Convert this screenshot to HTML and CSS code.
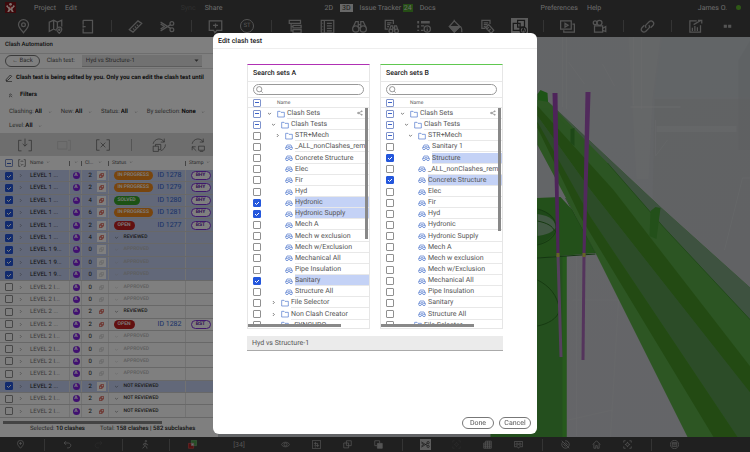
FILE: index.html
```html
<!DOCTYPE html>
<html lang="en">
<head>
  <meta charset="UTF-8">
  <meta name="viewport" content="width=device-width, initial-scale=1">
  <title>Clash Automation</title>
  <link rel="stylesheet" href="styles.css">
</head>
<body>

  <!-- Icon set -->
  <svg class="sprite" aria-hidden="true">
    <symbol id="i-pin" viewBox="0 0 24 24"><path d="M12 22C7 16 4 13 4 9a8 8 0 0 1 16 0c0 4-3 7-8 13z"/><circle cx="12" cy="9" r="3"/></symbol>
    <symbol id="i-pin-plus" viewBox="0 0 24 24"><path d="M12 22C7 16 4 13 4 9a8 8 0 0 1 16 0c0 4-3 7-8 13zM12 5v8M8 9h8"/></symbol>
    <symbol id="i-map" viewBox="0 0 24 24"><path d="M13 18l-4-2-7 4V5l7-3 6 3 7-3v10M9 2v14M15 5v8"/><path d="M18 23c-3-3-4-4-4-6a4 4 0 0 1 8 0c0 2-1 3-4 6z"/><circle cx="18" cy="17" r="1"/></symbol>
    <symbol id="i-door" viewBox="0 0 24 24"><path d="M5 2h15v20H5v-7M5 2v7M5 10v4M9 12h-4"/></symbol>
    <symbol id="i-ruler" viewBox="0 0 24 24"><path d="M2 17L16 3l6 4L8 21zM8 15l2 2M11 12l2 2M14 9l2 2"/></symbol>
    <symbol id="i-scissors" viewBox="0 0 24 24"><path d="M1 5l16 10M1 19L17 9M1 8l6 4-6 4"/><circle cx="19" cy="7" r="3"/><circle cx="19" cy="17" r="3"/></symbol>
    <symbol id="i-comment" viewBox="0 0 24 24"><path d="M2 3h20v15h-8l-3 4-2-4H2zM12 7v7M8 10h8"/></symbol>
    <symbol id="i-tree" viewBox="0 0 24 24"><path d="M2 2h18v5H2zM8 10h13v4H8zM8 17h13v5H8zM5 7v12h3M5 12h3"/></symbol>
    <symbol id="i-list" viewBox="0 0 24 24"><path d="M2 2h20v20H2zM7 2v20M11 7h8M11 11h8M11 15h8M11 19h8M4 7h1M4 12h1M4 17h1"/></symbol>
    <symbol id="i-bino" viewBox="0 0 24 24"><circle cx="6" cy="16" r="5"/><circle cx="18" cy="16" r="5"/><path d="M2 13L6 4h4v10M22 13L18 4h-4v10M10 9h4M10 14h4"/></symbol>
    <symbol id="i-set" viewBox="0 0 24 24"><circle cx="6" cy="16" r="4"/><circle cx="18" cy="16" r="4"/><path d="M2 15l4-9h12l4 9M9 11h6M10 16h4"/></symbol>
    <symbol id="i-docbino" viewBox="0 0 24 24"><path d="M7 16H2V2h13v6M5 6h7M5 9h5M5 12h3"/><circle cx="11" cy="19" r="3"/><circle cx="20" cy="19" r="3"/><path d="M9 17l2-6h3v7M22 17l-2-6h-3v7M14 14h3"/></symbol>
    <symbol id="i-listinfo" viewBox="0 0 24 24"><path d="M2 4h3M8 4h14M2 11h3M8 11h5M2 18h3M8 18h4M2 6h3M8 6h14M2 13h3"/><circle cx="18" cy="16" r="5"/><path d="M18 15v4M18 13v1"/></symbol>
    <symbol id="i-bucket" viewBox="0 0 24 24"><path d="M10 3l9 9-9 9-8-9zM10 3V1M19 12c4 1 3 6 3 9"/><path class="solid" d="M3 12h16l-9 9z"/></symbol>
    <symbol id="i-docpen" viewBox="0 0 24 24"><path d="M8 15H3V2h13v6M6 6h7M6 9h6M6 12h3M9 14l5-5 8 9-4 5zM11 16l3-3M14 19l3-3"/></symbol>
    <symbol id="i-auto" viewBox="0 0 24 24"><path d="M9 2h11v11H9zM2 7h11v11H2z"/><circle cx="18" cy="18" r="5"/><path d="M16 20l2-5 2 5"/></symbol>
    <symbol id="i-play" viewBox="0 0 24 24"><path d="M1 3h17v13H1zM20 8h3v13H6v-3M8 7l5 3-5 3z"/></symbol>
    <symbol id="i-camera" viewBox="0 0 24 24"><circle cx="5" cy="6" r="3"/><circle cx="12" cy="6" r="4"/><path d="M4 11h13v10H4zM17 15l5-3v8l-5-2"/></symbol>
    <symbol id="i-link" viewBox="0 0 24 24"><path d="M10 14c-2-2-1-4 0-5l5-5c4-3 9 2 6 6l-4 4M14 10c2 2 1 4 0 5l-5 5c-4 3-9-2-6-6l4-4"/></symbol>
    <symbol id="i-chart" viewBox="0 0 24 24"><path d="M14 3H3v18h17V10M7 19v-5M11 19v-8M15 19v-6M9 9l12-7M16 2h6v5"/></symbol>
    <symbol id="i-dots" viewBox="0 0 24 24"><path d="M7 10h3v3H7zM14 10h3v3h-3z" class="solid"/></symbol>
    <symbol id="i-undo" viewBox="0 0 24 24"><path d="M8 3L3 8l5 5M3 8h11c10 1 8 13 0 13h-3"/></symbol>
    <symbol id="i-redo" viewBox="0 0 24 24"><path d="M16 3l5 5-5 5M21 8H10C0 9 2 21 10 21h3"/></symbol>
    <symbol id="i-walk" viewBox="0 0 24 24"><circle cx="13" cy="3" r="2"/><path d="M12 8l-2 7 5 3 1 5M10 15l-2 4-4 3M12 8l-5 2-1 4M13 8l2 4 4 1"/></symbol>
    <symbol id="i-eye" viewBox="0 0 24 24"><path d="M1 12c5-8 17-8 22 0-5 8-17 8-22 0z"/><circle cx="12" cy="12" r="4"/></symbol>
    <symbol id="i-cross" viewBox="0 0 24 24"><path d="M1 1h22v22H1zM9 5v10h10M5 9h10v10M5 15h2M9 17v3"/></symbol>
    <symbol id="i-squares" viewBox="0 0 24 24"><path d="M9 2h13v13H9zM2 8h13v13H2z"/></symbol>
    <symbol id="i-solid" viewBox="0 0 24 24"><path d="M2 2h13v6M2 2v13h6"/><path class="solid" d="M9 9h13v13H9z"/></symbol>
    <symbol id="i-grid" viewBox="0 0 24 24"><path d="M2 8h20M2 13h20M2 18h20M2 22h20M2 8v14M7 3v19M12 3v19M17 3v19M22 3v19M7 3h15"/></symbol>
    <symbol id="i-vr" viewBox="0 0 24 24"><path d="M1 4h22v14h-8l-3 4-3-4H1z"/><circle cx="8" cy="11" r="3"/><circle cx="16" cy="11" r="3"/></symbol>
    <symbol id="i-orbit" viewBox="0 0 24 24"><path d="M4 6a10 10 0 1 0 7-4M2 2l20 20M12 7l5 5-5 5-5-5z"/></symbol>
    <symbol id="i-home" viewBox="0 0 24 24"><path d="M2 12L12 2l10 10M5 10v12h5v-7h4v7h5V10"/></symbol>
    <symbol id="i-focus" viewBox="0 0 24 24"><path d="M2 7V2h5M17 2h5v5M22 17v5h-5M7 22H2v-5"/><circle cx="12" cy="12" r="4"/><path d="M12 5v3M12 16v3M5 12h3M16 12h3"/></symbol>
    <symbol id="i-log" viewBox="0 0 24 24"><circle cx="12" cy="12" r="11"/><path d="M6 7h12v10H6zM6 10h12M9 13h6"/></symbol>
    <symbol id="i-pencil" viewBox="0 0 24 24"><path d="M4 16L16 3l4 4L8 19l-5 1zM3 23h18"/></symbol>
    <symbol id="i-up2" viewBox="0 0 24 24"><path d="M5 11l7-7 7 7M5 20l7-7 7 7"/></symbol>
    <symbol id="i-down" viewBox="0 0 24 24"><path d="M5 9l7 7 7-7"/></symbol>
    <symbol id="i-right" viewBox="0 0 24 24"><path d="M9 5l7 7-7 7"/></symbol>
    <symbol id="i-caret" viewBox="0 0 24 24"><path class="solid" d="M4 8h16l-8 9z"/></symbol>
    <symbol id="i-import" viewBox="0 0 24 24"><path d="M6 4H1v18h5M18 4h5v18h-5M12 1v13M8 10l4 4 4-4"/></symbol>
    <symbol id="i-box" viewBox="0 0 24 24"><path d="M1 6h16v13H1zM19 4h4v17h-4"/></symbol>
    <symbol id="i-clear" viewBox="0 0 24 24"><path d="M6 3H1v18h5M18 3h5v18h-5M8 8l8 8M16 8l-8 8"/></symbol>
    <symbol id="i-sync1" viewBox="0 0 24 24"><path d="M2 10C4 0 17-1 21 7M21 1v6h-6M23 11c0 5-3 9-8 11M2 14h9v9H2zM6 14v-3h9v9h-4"/></symbol>
    <symbol id="i-sync2" viewBox="0 0 24 24"><path d="M2 10C4 0 17-1 21 7M21 1v6h-6M2 21v-6h6M2 15l7 7M13 14h10v7H13zM15 23h6"/></symbol>
    <symbol id="i-expand" viewBox="0 0 24 24"><path d="M7 2H2v20h5M17 2h5v20h-5M8 9l4-4 4 4M8 15l4 4 4-4"/></symbol>
    <symbol id="i-clash" viewBox="0 0 24 24"><path d="M9 2h13v13H9zM2 9h13v13H2z"/></symbol>
    <symbol id="i-folder" viewBox="0 0 24 24"><path d="M2 4h7l3 3h10v14H2z"/></symbol>
    <symbol id="i-share" viewBox="0 0 24 24"><circle cx="5" cy="12" r="3"/><circle cx="19" cy="5" r="2"/><circle cx="19" cy="19" r="2"/><path d="M7 11l10-5M7 13l10 5"/></symbol>
    <symbol id="i-search" viewBox="0 0 24 24"><circle cx="11" cy="11" r="9"/><path d="M18 18l5 5"/></symbol>
  </svg>

  <div class="app">
    <header class="menu">
      <nav class="menu-left">
        <svg class="logo" viewBox="0 0 24 24" aria-hidden="true"><rect width="24" height="24" fill="#7a1218"/><g fill="#ffe4dc"><circle cx="12" cy="5" r="3"/><circle cx="5" cy="9" r="2"/><circle cx="19" cy="9" r="2"/><path d="M3 10l9 1 9-1-5 5 3 7h-4l-3-5-3 5H5l3-7z"/></g><circle cx="12" cy="12" r="2" fill="#e03030"/></svg>
        <a href="#">Project</a>
        <a href="#">Edit</a>
        <a href="#" class="off push">Sync</a>
        <a href="#">Share</a>
      </nav>
      <nav class="menu-mid">
        <a href="#">2D</a>
        <a href="#" class="mode">3D</a>
        <a href="#">Issue Tracker <b class="count">24</b></a>
        <a href="#">Docs</a>
      </nav>
      <nav class="menu-right">
        <a href="#">Preferences</a>
        <a href="#">Help</a>
        <a href="#" class="push">James O.</a>
        <i class="online"></i>
      </nav>
    </header>

    <div class="tools" id="tools" role="toolbar" aria-label="Main tools"></div>

    <main class="work">
      <section class="panel">
        <h1>Clash Automation</h1>
        <div class="test-row">
          <button class="pill">← Back</button>
          <label for="test">Clash test:</label>
          <span class="drop">
            <select id="test"><option>Hyd vs Structure-1</option></select>
            <svg><use href="#i-caret"/></svg>
          </span>
        </div>
        <p class="notice"><svg><use href="#i-pencil"/></svg>Clash test is being edited by you. Only you can edit the clash test until</p>
        <h2><svg><use href="#i-up2"/></svg>Filters</h2>
        <div class="filters">
          <label>Clashing: <select><option>All</option></select><svg><use href="#i-down"/></svg></label>
          <label>New: <select><option>All</option></select><svg><use href="#i-down"/></svg></label>
          <label>Status: <select><option>All</option></select><svg><use href="#i-down"/></svg></label>
          <label>By selection: <select><option>None</option></select><svg><use href="#i-down"/></svg></label>
          <label>Level: <select><option>All</option></select><svg><use href="#i-down"/></svg></label>
        </div>
        <div class="actions">
          <button aria-label="Import"><svg><use href="#i-import"/></svg></button>
          <button aria-label="Group" disabled><svg><use href="#i-box"/></svg></button>
          <button aria-label="Clear"><svg><use href="#i-clear"/></svg></button>
          <i class="sep"></i>
          <button aria-label="Refresh clashes"><svg><use href="#i-sync1"/></svg></button>
          <button aria-label="Refresh view"><svg><use href="#i-sync2"/></svg></button>
        </div>
        <div class="grid-wrap">
          <table class="clashes">
            <colgroup><col class="c-check"><col class="c-open"><col class="c-name"><col class="c-user"><col class="c-num"><col class="c-view"><col class="c-status"><col></colgroup>
            <thead>
              <tr>
                <th><input type="checkbox" class="some" aria-label="Select all"></th>
                <th><svg class="expand"><use href="#i-expand"/></svg></th>
                <th>Name <svg><use href="#i-down"/></svg></th>
                <th class="bar"><svg><use href="#i-down"/></svg></th>
                <th class="bar">Cl...</th>
                <th><svg><use href="#i-down"/></svg></th>
                <th class="bar">Status <svg><use href="#i-down"/></svg></th>
                <th class="bar">Stamp <svg><use href="#i-down"/></svg></th>
              </tr>
            </thead>
            <tbody id="clashes"></tbody>
          </table>
        </div>
        <div class="hbar"></div>
        <p class="totals"><span>Selected: <b>10 clashes</b></span><span>Total: <b>158 clashes | 582 subclashes</b></span></p>
      </section>

      <!-- Model view -->
      <svg class="model" viewBox="217 37 533 400" preserveAspectRatio="xMaxYMid slice" role="img" aria-label="3D model">
        <defs>
          <linearGradient id="haze" x1="0" y1="0" x2="1" y2="1">
            <stop offset="0" stop-color="#c8ccce"/>
            <stop offset="1" stop-color="#c6c8ce"/>
          </linearGradient>
        </defs>
        <rect x="217" y="37" width="533" height="400" fill="url(#haze)"/>
        <path d="M628 37h32l-8 62-4 80h-12z" fill="#d4d6d8" opacity=".3"/>
        <path d="M662 37h88v60h-96z" fill="#c2ccd0" opacity=".6"/>
        <path d="M654 99h96v189L652 207z" fill="#bcc0c4" opacity=".4"/>
        <path d="M656 126h80v6h-80zM630 106h50v2h-50z" fill="#d8dadd" opacity=".4"/>
        <path d="M738 60l12-20v110h-12z" fill="#b8bcc0" opacity=".4"/>
        <g fill="none" stroke="#dadcdf" opacity=".35">
          <path d="M562 37v70M566 37v72M633 37v68M641 37v72M568 62l16 22M602 64l12 22M724 250l18-72h8M572 300h46l-8 137M576 256v180M568 420l44-10"/>
          <path d="M655 120v36l12-16"/>
        </g>
        <path d="M566 256h32l90 181H566z" fill="#d0d2d4" opacity=".3"/>
        <path d="M536 198l24-1 12 13 23 43-58 5-47 5v-64z" fill="#46a034"/>
        <path d="M490 260l76-4v181h-76z" fill="#489e3c"/>
        <path d="M562 256h4v181h-4z" fill="#4cb238"/>
        <path d="M537 209c22 4 28 25 0 36v-10c16-5 16-12 0-14z" fill="#3c9030"/>
        <path d="M537 214c14 2 18 7 18 14-4 5-10 7-18 8z" fill="#84b088"/>
        <path d="M537 209c24 6 26 30 0 36M537 221c10 2 15 5 17 10M537 280c12 6 20 15 22 30-2 9-12 14-22 16" fill="none" stroke="#2c7422"/>
        <path d="M490 261l47-3 58-4" fill="none" stroke="#286c22"/>
        <path d="M537 94l3-4 7 3 1 17h-11z" fill="#3ca82e"/>
        <path d="M537 100l11 2 112 105 90 81v149h-63l-92-184-58-108z" fill="#5aac46"/>
        <path d="M547 101l113 106 90 81v32l-87-93-56-64z" fill="#7ca480"/>
        <path d="M547 108l60 55 56 64 87 93v47L613 190l-76-82z" fill="#58aa46"/>
        <path d="M537 106l76 84 137 177v27L590 190l-53-74z" fill="#469426"/>
        <path d="M537 116l53 74 160 203v44h-13L590 217l-53-93z" fill="#589850"/>
        <path d="M537 122l53 95 147 220h-24L580 217l-43-89z" fill="#469426"/>
        <path d="M607 163l56 64 87 93M565 198l30 55" fill="none" stroke="#3a8c2c" opacity=".7"/>
        <path d="M650 211l5-4 5 1-4 31-7-3z" fill="#46a034"/>
        <path d="M570 129l4-1v18l-4-3z" fill="#3c9030"/>
        <path d="M552 93h5l2 162h-3z" fill="#9c48b4"/>
        <path d="M556 255h3l3 102h-3z" fill="#ac80bc"/>
        <path d="M585 92h5l-5 163h-3z" fill="#a254b8"/>
        <path d="M582 255h3l-1 105h-3z" fill="#a868b8"/>
        <path d="M556 253h3v4h-3zM582 253h3v4h-3z" fill="#c8c84c"/>
      </svg>
    </main>

    <footer class="status" id="status" role="toolbar" aria-label="View tools"></footer>
  </div>

  <!-- Edit clash test -->
  <div class="overlay">
    <div class="modal" role="dialog" aria-modal="true" aria-labelledby="modal-title">
      <h2 id="modal-title">Edit clash test</h2>
      <div class="modal-body">
        <div class="sets">
          <section class="set set-a">
            <h3>Search sets A</h3>
            <div class="search"><svg><use href="#i-search"/></svg><input type="search" aria-label="Search sets A"></div>
            <div class="tree-wrap">
              <div class="tree-head"><input type="checkbox" class="some" aria-label="Select all in A"><span>Name</span></div>
              <div class="tree-clip"><table class="tree" id="treeA"></table><i class="vbar"></i></div>
              <div class="hbar"></div>
            </div>
          </section>
          <section class="set set-b">
            <h3>Search sets B</h3>
            <div class="search"><svg><use href="#i-search"/></svg><input type="search" aria-label="Search sets B"></div>
            <div class="tree-wrap">
              <div class="tree-head"><input type="checkbox" class="some" aria-label="Select all in B"><span>Name</span></div>
              <div class="tree-clip"><table class="tree" id="treeB"></table><i class="vbar short"></i></div>
              <div class="hbar"></div>
            </div>
          </section>
        </div>
        <input type="text" class="test-name" value="Hyd vs Structure-1" aria-label="Clash test name">
      </div>
      <div class="modal-foot">
        <button class="pill">Done</button>
        <button class="pill">Cancel</button>
      </div>
    </div>
  </div>

  <script src="script.js"></script>
</body>
</html>
```

FILE: styles.css
```css
* {
  box-sizing: border-box;
}

body {
  margin: 0;
  font-family: Roboto, 'Liberation Sans', sans-serif;
  font-size: 7px;
  line-height: 10px;
  color: #555;
  text-rendering: geometricPrecision;
}

h1, h2, h3, p {
  margin: 0;
  font-size: inherit;
  font-weight: 500;
  color: #222;
}

a {
  color: inherit;
  text-decoration: none;
}

button, input, select {
  font: inherit;
  color: inherit;
  text-rendering: inherit;
  margin: 0;
  padding: 0;
  border: none;
  background: none;
}

svg {
  width: 8px;
  height: 8px;
  flex: none;
  fill: none;
  stroke: currentColor;
  stroke-width: 2;
}

svg .solid {
  fill: currentColor;
}

.sprite {
  display: none;
}

.app {
  height: 100vh;
  display: flex;
  flex-direction: column;
}

.push {
  margin-left: auto;
}

.off {
  opacity: .2;
}

/* top menu */
.menu {
  display: grid;
  grid-template-columns: 1fr auto 1fr;
  height: 15px;
  background: #404040;
  color: #d8d8d8;
}

.menu nav {
  display: flex;
  align-items: center;
  gap: 9px;
}

.menu .menu-left {
  padding-left: 5px;
  padding-right: 92px;
}

.menu .menu-mid {
  gap: 7px;
  padding-left: 10px;
}

.menu-left .logo {
  width: 11px;
  height: 11px;
  margin-right: 9px;
  stroke: none;
}

.menu .menu-right {
  padding-left: 105px;
  padding-right: 9px;
}

.mode {
  padding: 0 2px;
  line-height: 8px;
  background: #d0d0d0;
  color: #333;
}

.count {
  padding: 0 1px;
  font-weight: 400;
  background: #4a9a2a;
}

.online {
  width: 5px;
  height: 5px;
  border-radius: 50%;
  background: #5cb02c;
}

/* toolbars */
.tools, .status {
  display: flex;
  align-items: center;
  background: #404040;
  color: #a8a8a8;
}

.tools {
  height: 22px;
  justify-content: center;
}

.tools button, .status button {
  display: flex;
  align-items: center;
  justify-content: center;
  width: 32px;
  height: 100%;
}

.tools svg {
  width: 15px;
  height: 15px;
}

.sep {
  width: 16px;
  height: 12px;
  background: linear-gradient(#686868, #686868) center / 1px 100% no-repeat;
}

.ring {
  width: 14px;
  height: 14px;
  line-height: 12px;
  border: 1px solid;
  border-radius: 50%;
  text-align: center;
  font-size: 6px;
}

.active {
  display: flex;
  padding: 1px;
  background: #b8b8b8;
  color: #333;
}

.status {
  height: 15px;
  padding-left: 5px;
}

.status button {
  width: 31px;
}

.status button.wide {
  width: 62px;
}

.status svg {
  width: 9px;
  height: 9px;
}

.work {
  flex: 1;
  min-height: 0;
  display: flex;
}

.model {
  flex: 1;
  width: auto;
  height: 100%;
  min-width: 0;
  stroke: none;
  stroke-width: 1;
}

/* clash panel */
.panel {
  flex: none;
  width: 29%;
  display: flex;
  flex-direction: column;
  overflow: hidden;
  font-size: 6px;
  background: #fff;
}

.panel h1 {
  padding: 3px 5px;
  border-bottom: 1px solid #ddd;
}

.test-row {
  display: flex;
  align-items: center;
  gap: 7px;
  padding: 1px 5px;
  border-bottom: 1px solid #e4e4e4;
}

.pill {
  height: 12px;
  padding: 0 6px;
  border: 1px solid #777;
  border-radius: 6px;
  line-height: 10px;
}

.drop {
  display: flex;
  align-items: center;
  flex: 0 1 120px;
  height: 12px;
  background: #e2e2e2;
  border-bottom: 1px solid #bbb;
}

select {
  appearance: none;
}

.drop select {
  flex: 1;
  padding-left: 4px;
}

.drop svg {
  width: 5px;
  height: 5px;
  margin-right: 3px;
}

.notice {
  display: flex;
  align-items: center;
  gap: 3px;
  padding: 4px 5px;
  font-weight: 700;
  white-space: nowrap;
}

.panel h2 {
  display: flex;
  align-items: center;
  gap: 7px;
  padding: 3px 8px;
  font-weight: 700;
}

.panel h2 svg {
  width: 5px;
  height: 5px;
  stroke-width: 3;
}

.filters {
  display: flex;
  flex-wrap: wrap;
  gap: 4px 9px;
  padding: 4px 0 2px 9px;
}

.filters label {
  display: flex;
  align-items: center;
  gap: 1px;
}

.filters select {
  font-weight: 700;
  color: #222;
}

.filters svg, th svg {
  width: 4px;
  height: 4px;
  margin-left: 4px;
}

.actions {
  display: flex;
  align-items: center;
  justify-content: space-between;
  height: 23px;
  padding: 0 12px 0 18px;
  background: #dcdcdc;
  color: #444;
}

.actions button {
  display: flex;
}

.actions button:disabled {
  color: #bbb;
}

.actions svg {
  width: 14px;
  height: 14px;
  stroke-width: 1;
}

.actions .sep {
  margin: 0 -12px;
  background-image: linear-gradient(#aaa, #aaa);
}

.grid-wrap {
  flex: 1;
  min-height: 0;
}

.clashes {
  width: 100%;
  height: 100%;
  table-layout: fixed;
  border-collapse: collapse;
}

.c-check { width: 18px; }
.c-open { width: 10px; }
.c-name { width: 41px; }
.c-user { width: 12px; }
.c-num { width: 14px; }
.c-view { width: 13px; }
.c-status { width: 77px; }

.clashes th, .clashes td {
  padding: 0 0 0 2px;
  line-height: 7px;
  white-space: nowrap;
  overflow: hidden;
  text-align: left;
  vertical-align: middle;
}

.clashes th {
  height: 14px;
  font-size: 5px;
  font-weight: 400;
}

.clashes th:nth-child(2), .clashes td:nth-child(2) {
  padding-left: 0;
}

.clashes th svg {
  margin-left: 1px;
  vertical-align: middle;
}

.clashes th .expand {
  width: 8px;
  height: 8px;
  margin: 0;
}

.clashes .bar {
  padding-left: 4px;
  background: linear-gradient(#888, #888) left / 1px 5px no-repeat;
}

.clashes td {
  border-bottom: 1px solid #d0d0d0;
  border-right: 1px solid #e4e4e4;
}

.clashes td:first-child, .clashes th:first-child {
  padding-left: 5px;
}

.clashes td:nth-child(1), .clashes td:nth-child(2), .clashes td:nth-child(5) {
  border-right: none;
}

.clashes tr.on td {
  background: #c4d0f2;
}

.clashes td svg {
  display: block;
  width: 5px;
  height: 5px;
}

.clashes td:nth-child(4) {
  padding-left: 3px;
}

.clashes td:nth-child(5) {
  padding-left: 7px;
  color: #222;
}

.clashes tr.on td:nth-child(3) {
  color: #222;
}

.clashes tr:not(.on) td:nth-child(3) {
  color: #777;
}

.user {
  display: block;
  width: 7px;
  height: 7px;
  border-radius: 50%;
  background: #8020e0;
  color: #fff;
  text-align: center;
  font-size: 5px;
  font-weight: 700;
}

.clashes td .clash {
  width: 9px;
  height: 9px;
  padding: 2px;
  background: #fff;
  color: #d03020;
  stroke-width: 3;
}

.clashes td .clash.none {
  color: #ccc;
}

.state {
  display: flex;
  align-items: center;
  gap: 5px;
  padding-left: 3px;
  font-size: 5px;
  font-weight: 500;
  color: #333;
}

.state.approved {
  color: #bbb;
}

.issue {
  display: flex;
  align-items: center;
  justify-content: space-between;
  padding: 0 3px;
}

.issue a {
  font-size: 7px;
  color: #2c62d0;
}

.tag {
  padding: 1px 4px;
  border-radius: 5px;
  color: #fff;
  font-size: 5px;
  font-weight: 500;
}

.tag.progress { background: #f08a1c; }
.tag.solved { background: #38a428; }
.tag.open { background: #c42020; }

.stamp {
  display: inline-block;
  width: 20px;
  margin-left: 3px;
  border: 1px solid #8030d8;
  border-radius: 5px;
  background: #fff;
  color: #6424a8;
  text-align: center;
  font-size: 5px;
  font-weight: 700;
}

.hbar {
  width: 77%;
  height: 3px;
  background: #888;
}

.panel .hbar {
  width: 73%;
  margin: 3px 3px 0;
}

.totals {
  display: flex;
  gap: 15px;
  padding: 0 0 3px 30px;
  white-space: nowrap;
  color: #555;
  font-weight: 400;
}

.totals b {
  font-weight: 500;
  color: #222;
}

/* check boxes */
input[type="checkbox"] {
  appearance: none;
  display: block;
  flex: none;
  width: 8px;
  height: 8px;
  border: 1px solid #909090;
  border-radius: 1px;
  background: #fff center / 100% no-repeat;
}

input[type="checkbox"]:checked {
  border-color: #2457dc;
  background-color: #2457dc;
  background-image: url("data:image/svg+xml,%3Csvg xmlns='http://www.w3.org/2000/svg' viewBox='0 0 12 12'%3E%3Cpath d='M2 6l3 3 5-5' fill='none' stroke='white' stroke-width='2'/%3E%3C/svg%3E");
}

input[type="checkbox"].some {
  border-color: #7f93cc;
  background-image: linear-gradient(#3c62c8, #3c62c8);
  background-size: 4px 1px;
}

/* modal */
.overlay {
  position: fixed;
  inset: 0;
  display: flex;
  justify-content: center;
  padding: 33px 0 18px;
  background: rgba(0, 0, 0, .5);
}

.modal {
  display: flex;
  flex-direction: column;
  width: 100%;
  max-width: 324px;
  border-radius: 6px;
  background: #fff;
}

.modal h2 {
  padding: 3px 5px 2px;
  border-bottom: 1px solid #eee;
}

.modal-body {
  display: flex;
  flex-direction: column;
  gap: 7px;
  padding: 15px 34px 0;
}

.sets {
  display: grid;
  grid-template-columns: 1fr 1fr;
  gap: 10px;
}

.set {
  border: 1px solid #e6e6e6;
  border-top: 1px solid;
}

.set-a { border-top-color: #b030b4; }
.set-b { border-top-color: #60c850; }

.set h3 {
  padding: 3px 5px;
  border-bottom: 1px solid #e8e8e8;
}

.search {
  display: flex;
  align-items: center;
  gap: 2px;
  height: 11px;
  margin: 2px 5px;
  padding: 0 2px;
  border: 1px solid #999;
  border-radius: 6px;
}

.search svg {
  width: 7px;
  height: 7px;
}

.search input {
  flex: 1;
  min-width: 0;
}

.tree-head {
  display: flex;
  align-items: center;
  gap: 16px;
  height: 11px;
  padding-left: 5px;
  border-top: 1px solid #e8e8e8;
  border-bottom: 1px solid #e8e8e8;
  font-size: 5px;
}

.tree-clip {
  position: relative;
  height: 216px;
  overflow: hidden;
}

.tree {
  width: 100%;
  height: 223px;
  border-collapse: collapse;
}

.tree td {
  height: 11px;
  padding: 0;
}

.tree td:first-child {
  width: 18px;
  padding-left: 5px;
}

.node {
  display: flex;
  align-items: center;
  height: 11px;
}

.lv1 { padding-left: 1px; }
.lv2 { padding-left: 5px; }
.lv3 { padding-left: 9px; }
.lv4 { padding-left: 13px; }

.node .arrow {
  width: 5px;
  height: 5px;
  margin-right: 5px;
  color: #333;
  stroke-width: 3;
}

.node .kind {
  width: 8px;
  height: 8px;
  margin-right: 2px;
  color: #4c74cc;
}

.node label {
  display: flex;
  align-items: center;
  flex: 1;
  height: 11px;
  border-bottom: 1px solid #e8e8e8;
  white-space: nowrap;
}

.node label svg {
  width: 6px;
  height: 6px;
  margin: 0 6px 0 auto;
}

.on .node label {
  background: #c4d2f6;
}

.vbar {
  position: absolute;
  top: 0;
  right: 1px;
  width: 3px;
  height: 131px;
  background: #888;
}

.vbar.short {
  height: 123px;
}

.set .hbar {
  margin-bottom: 1px;
}

.test-name {
  height: 15px;
  padding: 0 5px;
  background: #ebebeb;
  border-bottom: 1px solid #aaa;
}

.modal-foot {
  display: flex;
  justify-content: flex-end;
  gap: 5px;
  margin-top: auto;
  padding: 5px 6px;
}

.modal-foot .pill {
  width: 32px;
  padding: 0;
}
```

FILE: script.js
```js
const icon = (name, cls = '') => `<svg class="${cls}"><use href="#i-${name}"/></svg>`;

// toolbars, "|" is a divider
const tools = ['pin', 'map', 'door', '|', 'ruler', 'scissors', '|', 'comment', 'ST', '|',
  'tree', 'list', 'bino', 'docbino', 'listinfo', 'bucket', 'docpen', '*auto', '|',
  'play', 'camera', '|', 'link', '|', 'chart', 'dots'];

const status = ['pin-plus', '|', 'undo', '-redo', '|', 'walk', '|', 'colors', '[34]',
  'eye', 'cross', 'squares', 'solid', '|', '*scissors', '-focus', 'grid', 'vr', '|',
  'orbit', 'home', 'focus', '|', 'log'];

function toolButton(t) {
  if (t === '|') return '<i class="sep"></i>';
  if (t === 'ST') return '<button><span class="ring">ST</span></button>';
  if (t === '[34]') return '<button class="wide">[34]</button>';
  if (t === 'colors') {
    return `<button aria-label="colors"><svg viewBox="0 0 24 24"><path d="M9 1h14v14H9z" fill="#4c9a4c" stroke="#70b070"/>
      <path d="M1 9h14v13H1z" fill="#a82020" stroke="#d05050"/><path d="M9 9h6v6H9z" fill="#ddd"/></svg></button>`;
  }
  const name = t.replace(/^[*-]/, '');
  if (t[0] === '*') return `<button aria-label="${name}"><span class="active">${icon(name)}</span></button>`;
  return `<button aria-label="${name}" class="${t[0] === '-' ? 'off' : ''}">${icon(name)}</button>`;
}

document.getElementById('tools').innerHTML = tools.map(toolButton).join('');
document.getElementById('status').innerHTML = status.map(toolButton).join('');

// checked, name, count, status, issue, stamp
const clashes = [
  [1, 'LEVEL 1 ...', 2, 'In progress', 1278, 'BHY'],
  [1, 'LEVEL 1 ...', 2, 'In progress', 1279, 'BHY'],
  [1, 'LEVEL 1 ...', 4, 'Solved', 1280, 'BHY'],
  [1, 'LEVEL 1 ...', 6, 'In progress', 1281, 'BHY'],
  [1, 'LEVEL 1 ...', 2, 'Open', 1277, 'BST'],
  [1, 'LEVEL 1 ...', 4, 'Reviewed'],
  [1, 'LEVEL 1 9...', 0, 'Approved'],
  [1, 'LEVEL 1 9...', 0, 'Approved'],
  [1, 'LEVEL 1 9...', 0, 'Approved'],
  [0, 'LEVEL 2 I...', 0, 'Approved'],
  [0, 'LEVEL 2 I...', 0, 'Approved'],
  [0, 'LEVEL 2 ...', 2, 'Reviewed'],
  [0, 'LEVEL 2 ...', 2, 'Open', 1282, 'BST'],
  [0, 'LEVEL 2 I...', 0, 'Approved'],
  [0, 'LEVEL 2 I...', 0, 'Approved'],
  [0, 'LEVEL 2 I...', 0, 'Approved'],
  [0, 'LEVEL 2 I...', 0, 'Approved'],
  [1, 'LEVEL 2 ...', 2, 'Not reviewed'],
  [0, 'LEVEL 2 I...', 2, 'Not reviewed'],
  [0, 'LEVEL 2 I...', 2, 'Not reviewed']
];

const tagClass = { 'In progress': 'progress', 'Solved': 'solved', 'Open': 'open' };

document.getElementById('clashes').innerHTML = clashes.map(([on, name, n, state, id, stamp]) => `
  <tr class="${on ? 'on' : ''}">
    <td><input type="checkbox" aria-label="${name}" ${on ? 'checked' : ''}></td>
    <td>${icon('right')}</td>
    <td>${name}</td>
    <td><span class="user">A</span></td>
    <td>${n}</td>
    <td>${icon('clash', n ? 'clash' : 'clash none')}</td>
    <td>${id
      ? `<div class="issue"><span class="tag ${tagClass[state]}">${state.toUpperCase()}</span><a href="#">ID ${id}</a></div>`
      : `<div class="state ${state.toLowerCase()}">${icon('down')}${state.toUpperCase()}</div>`}</td>
    <td>${stamp ? `<span class="stamp">${stamp}</span>` : ''}</td>
  </tr>`).join('');

// level, name, kind (v open folder, > closed folder, empty for a search set), check
const leaf = (level, names, picked) => names.map(n => [level, n, '', picked.includes(n) ? 'on' : '']);

const treeA = [
  [1, 'Clash Sets', 'v', 'some'],
  [2, 'Clash Tests', 'v', 'some'],
  [3, 'STR+Mech', '>', ''],
  ...leaf(3, ['_ALL_nonClashes_rem', 'Concrete Structure', 'Elec', 'Fir', 'Hyd', 'Hydronic',
    'Hydronic Supply', 'Mech A', 'Mech w exclusion', 'Mech w/Exclusion', 'Mechanical All',
    'Pipe Insulation', 'Sanitary', 'Structure All'], ['Hydronic', 'Hydronic Supply', 'Sanitary']),
  [2, 'File Selector', '>', ''],
  [2, 'Non Clash Creator', '>', ''],
  [2, '_SYNCHRO', '>', '']
];

const treeB = [
  [1, 'Clash Sets', 'v', 'some'],
  [2, 'Clash Tests', 'v', 'some'],
  [3, 'STR+Mech', 'v', 'some'],
  ...leaf(4, ['Sanitary 1', 'Structure'], ['Structure']),
  ...leaf(3, ['_ALL_nonClashes_rem', 'Concrete Structure', 'Elec', 'Fir', 'Hyd', 'Hydronic',
    'Hydronic Supply', 'Mech A', 'Mech w exclusion', 'Mech w/Exclusion', 'Mechanical All',
    'Pipe Insulation', 'Sanitary', 'Structure All'], ['Concrete Structure']),
  [2, 'File Selector', '>', '']
];

function drawTree(id, rows) {
  document.getElementById(id).innerHTML = rows.map(([level, name, kind, check], i) => `
    <tr class="${check}">
      <td><input type="checkbox" id="${id}-${i}" class="${check === 'some' ? 'some' : ''}" ${check === 'on' ? 'checked' : ''}></td>
      <td><div class="node lv${level}">
        ${kind ? icon(kind === 'v' ? 'down' : 'right', 'arrow') : '<svg class="arrow"></svg>'}
        ${icon(kind ? 'folder' : 'set', 'kind')}
        <label for="${id}-${i}">${name}${level === 1 ? icon('share') : ''}</label>
      </div></td>
    </tr>`).join('');
}

drawTree('treeA', treeA);
drawTree('treeB', treeB);
```
